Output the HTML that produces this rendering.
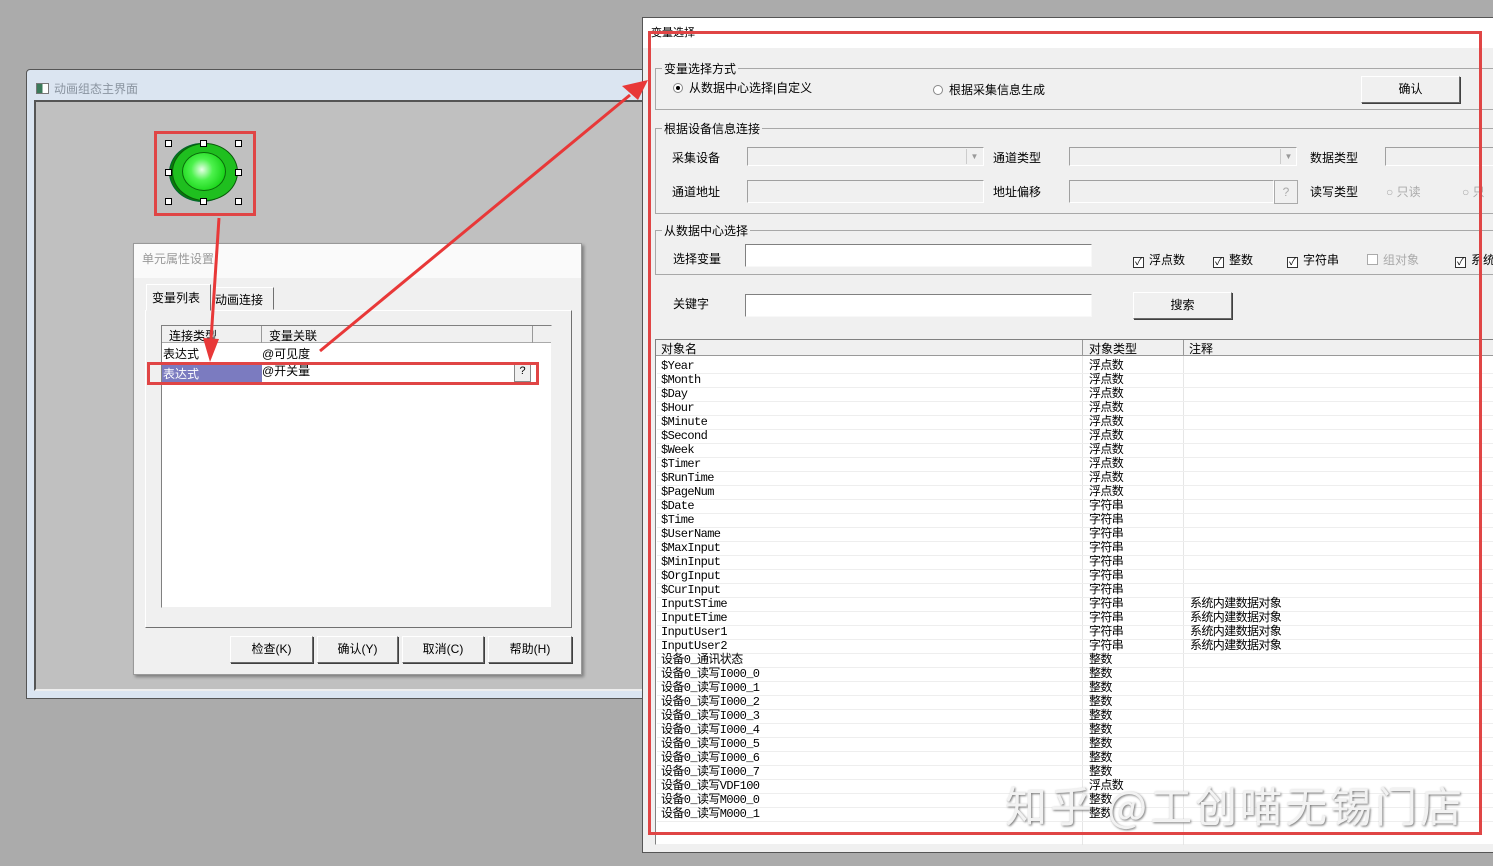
<!DOCTYPE html>
<html><head><meta charset="utf-8"><style>
*{margin:0;padding:0;box-sizing:border-box}
body{width:1493px;height:866px;background:#ababab;position:relative;overflow:hidden;font-family:"Liberation Sans","Noto Sans CJK SC",sans-serif;font-size:12px;color:#000}
.a{position:absolute;white-space:nowrap}
.btn{position:absolute;background:#f0f0f0;border:1px solid;border-color:#fff #6a6a6a #6a6a6a #fff;box-shadow:1px 1px 0 #404040;text-align:center;font-size:12px}
.in{position:absolute;background:#fff;border:1px solid;border-color:#808080 #f8f8f8 #f8f8f8 #808080}
.dis{position:absolute;background:#f0f0f0;border:1px solid;border-color:#a0a0a0 #fff #fff #a0a0a0}
.grp{position:absolute;border:1px solid #a8a8a8;border-right:none}
.lbl{position:absolute;background:#f0f0f0;padding:0 2px;font-size:12px}
.cb{display:inline-block;width:11px;height:11px;border:1px solid #333;background:#fff;font-size:10px;line-height:9px;text-align:center;vertical-align:-1px;margin-right:5px}
.row{position:absolute;left:657px;width:836px;height:14px;border-bottom:1px solid #eee;font-family:"Liberation Mono","Noto Sans CJK SC",monospace;font-size:12px;line-height:13px;letter-spacing:-0.6px}
.row span{position:absolute}
</style></head><body>

<div class="a" style="left:26px;top:69px;width:630px;height:630px;background:#dbe5f1;border:1px solid #555;border-radius:4px 4px 0 0"></div>
<div class="a" style="left:36px;top:80px;color:#8a94a0;font-size:12px"><span style="display:inline-block;width:13px;height:11px;border:1px solid #777;background:linear-gradient(90deg,#3b7a5a 50%,#fff 50%);vertical-align:-1px;margin-right:5px"></span>动画组态主界面</div>
<div class="a" style="left:34px;top:100px;width:620px;height:591px;background:#c0c0c0;border:2px solid #555;border-right:none;border-bottom-color:#eee"></div>

<div class="a" style="left:154px;top:131px;width:102px;height:85px;border:3px solid #e04545"></div>
<div class="a" style="left:169px;top:143px;width:66px;height:59px;border-radius:50%;background:#0a7a0a;border:1px solid #063"></div>
<div class="a" style="left:172px;top:143px;width:66px;height:58px;border-radius:50%;background:#1fbf1f;border:1px solid #0a5a0a"></div>
<div class="a" style="left:182px;top:152px;width:44px;height:39px;border-radius:50%;background:radial-gradient(circle at 45% 45%,#e8ffe8 0,#4df24d 35%,#12d012 80%);border:1px solid #0a6a0a"></div>
<div class="a" style="left:165px;top:140px;width:7px;height:7px;background:#fff;border:1px solid #000"></div>
<div class="a" style="left:200px;top:140px;width:7px;height:7px;background:#fff;border:1px solid #000"></div>
<div class="a" style="left:235px;top:140px;width:7px;height:7px;background:#fff;border:1px solid #000"></div>
<div class="a" style="left:165px;top:169px;width:7px;height:7px;background:#fff;border:1px solid #000"></div>
<div class="a" style="left:235px;top:169px;width:7px;height:7px;background:#fff;border:1px solid #000"></div>
<div class="a" style="left:165px;top:198px;width:7px;height:7px;background:#fff;border:1px solid #000"></div>
<div class="a" style="left:200px;top:198px;width:7px;height:7px;background:#fff;border:1px solid #000"></div>
<div class="a" style="left:235px;top:198px;width:7px;height:7px;background:#fff;border:1px solid #000"></div>

<div class="a" style="left:133px;top:243px;width:449px;height:432px;background:#f0f0f0;border:1px solid #999;box-shadow:2px 2px 3px rgba(0,0,0,.35)"></div>
<div class="a" style="left:134px;top:244px;width:447px;height:34px;background:#fafafa"></div>
<div class="a" style="left:142px;top:250px;color:#999">单元属性设置</div>
<div class="a" style="left:145px;top:310px;width:427px;height:318px;border:1px solid;border-color:#fff #707070 #707070 #fff"></div>
<div class="a" style="left:146px;top:284px;width:65px;height:27px;background:#f0f0f0;border:1px solid;border-color:#fff #707070 transparent #fff;padding:4px 5px">变量列表</div>
<div class="a" style="left:212px;top:287px;width:62px;height:23px;border:1px solid;border-color:#fff #707070 transparent transparent;padding:3px 2px">动画连接</div>
<div class="a" style="left:161px;top:325px;width:391px;height:283px;background:#fff;border:1px solid;border-color:#808080 #f0f0f0 #f0f0f0 #808080"></div>
<div class="a" style="left:162px;top:326px;width:389px;height:17px;background:#f0f0f0;border-bottom:1px solid #aaa"></div>
<div class="a" style="left:261px;top:326px;width:1px;height:17px;background:#999"></div>
<div class="a" style="left:532px;top:326px;width:1px;height:17px;background:#999"></div>
<div class="a" style="left:169px;top:327px">连接类型</div>
<div class="a" style="left:269px;top:327px">变量关联</div>
<div class="a" style="left:163px;top:345px">表达式</div>
<div class="a" style="left:262px;top:345px">@可见度</div>
<div class="a" style="left:162px;top:364px;width:100px;height:18px;background:#7b7bc0"></div>
<div class="a" style="left:163px;top:365px;color:#fff">表达式</div>
<div class="a" style="left:262px;top:362px">@开关量</div>
<div class="a" style="left:514px;top:364px;width:17px;height:18px;background:#f0f0f0;border:1px solid #888;text-align:center;font-size:11px">?</div>
<div class="a" style="left:147px;top:362px;width:392px;height:23px;border:3px solid #e04545"></div>
<div class="btn" style="left:230px;top:636px;width:83px;height:27px;line-height:25px">检查(K)</div>
<div class="btn" style="left:317px;top:636px;width:81px;height:27px;line-height:25px">确认(Y)</div>
<div class="btn" style="left:402px;top:636px;width:82px;height:27px;line-height:25px">取消(C)</div>
<div class="btn" style="left:488px;top:636px;width:84px;height:27px;line-height:25px">帮助(H)</div>

<div class="a" style="left:642px;top:17px;width:851px;height:836px;background:#f0f0f0;border:1px solid #555;border-right:none"></div>
<div class="a" style="left:643px;top:18px;width:850px;height:30px;background:#fff"></div>
<div class="a" style="left:651px;top:24px;font-size:11px">变量选择</div>

<div class="grp" style="left:655px;top:68px;width:838px;height:42px"></div>
<div class="lbl" style="left:662px;top:60px">变量选择方式</div>
<div class="a" style="left:673px;top:79px"><span style="display:inline-block;width:10px;height:10px;border-radius:50%;border:1px solid #888;background:#fff;vertical-align:-1px;margin-right:6px;position:relative"><span style="position:absolute;left:2px;top:2px;width:4px;height:4px;border-radius:50%;background:#000"></span></span>从数据中心选择|自定义</div>
<div class="a" style="left:933px;top:81px"><span style="display:inline-block;width:10px;height:10px;border-radius:50%;border:1px solid #888;background:#fff;vertical-align:-1px;margin-right:6px"></span>根据采集信息生成</div>
<div class="btn" style="left:1361px;top:76px;width:99px;height:27px;line-height:25px">确认</div>

<div class="grp" style="left:655px;top:128px;width:838px;height:86px"></div>
<div class="lbl" style="left:662px;top:120px">根据设备信息连接</div>
<div class="a" style="left:672px;top:149px">采集设备</div>
<div class="dis" style="left:747px;top:147px;width:237px;height:19px"></div>
<div class="a" style="left:966px;top:149px;width:16px;height:15px;border-left:1px solid #ccc;color:#999;font-size:8px;text-align:center;line-height:15px">▼</div>
<div class="a" style="left:993px;top:149px">通道类型</div>
<div class="dis" style="left:1069px;top:147px;width:228px;height:19px"></div>
<div class="a" style="left:1280px;top:149px;width:16px;height:15px;border-left:1px solid #ccc;color:#999;font-size:8px;text-align:center;line-height:15px">▼</div>
<div class="a" style="left:1310px;top:149px">数据类型</div>
<div class="dis" style="left:1385px;top:147px;width:110px;height:19px"></div>
<div class="a" style="left:672px;top:183px">通道地址</div>
<div class="dis" style="left:747px;top:180px;width:237px;height:23px"></div>
<div class="a" style="left:993px;top:183px">地址偏移</div>
<div class="dis" style="left:1069px;top:180px;width:205px;height:23px"></div>
<div class="a" style="left:1274px;top:180px;width:24px;height:24px;border:1px solid #aaa;color:#aaa;text-align:center;line-height:22px">?</div>
<div class="a" style="left:1310px;top:183px">读写类型</div>
<div class="a" style="left:1386px;top:183px;color:#aaa">○ 只读</div>
<div class="a" style="left:1462px;top:183px;color:#aaa">○ 只</div>

<div class="grp" style="left:655px;top:230px;width:838px;height:45px"></div>
<div class="lbl" style="left:662px;top:222px">从数据中心选择</div>
<div class="a" style="left:673px;top:250px">选择变量</div>
<div class="in" style="left:745px;top:244px;width:347px;height:23px"></div>
<div class="a" style="left:1133px;top:251px"><span class="cb">✓</span>浮点数</div>
<div class="a" style="left:1213px;top:251px"><span class="cb">✓</span>整数</div>
<div class="a" style="left:1287px;top:251px"><span class="cb">✓</span>字符串</div>
<div class="a" style="left:1367px;top:251px;color:#aaa"><span class="cb" style="border-color:#aaa"></span>组对象</div>
<div class="a" style="left:1455px;top:251px"><span class="cb">✓</span>系统</div>
<div class="a" style="left:673px;top:295px">关键字</div>
<div class="in" style="left:745px;top:294px;width:347px;height:23px"></div>
<div class="btn" style="left:1133px;top:292px;width:99px;height:27px;line-height:25px">搜索</div>

<div class="a" style="left:655px;top:339px;width:840px;height:506px;background:#fff;border:1px solid;border-color:#808080 #fff #f0f0f0 #808080"></div>
<div class="a" style="left:656px;top:340px;width:837px;height:16px;background:#f0f0f0;border-bottom:1px solid #999"></div>
<div class="a" style="left:1082px;top:340px;width:1px;height:505px;background:#e6e6e6"></div>
<div class="a" style="left:1183px;top:340px;width:1px;height:505px;background:#e6e6e6"></div>
<div class="a" style="left:1082px;top:340px;width:1px;height:16px;background:#999"></div>
<div class="a" style="left:1183px;top:340px;width:1px;height:16px;background:#999"></div>
<div class="a" style="left:661px;top:340px">对象名</div>
<div class="a" style="left:1089px;top:340px">对象类型</div>
<div class="a" style="left:1189px;top:340px">注释</div>

<div class="row" style="top:360px"><span style="left:4px">$Year</span><span style="left:432px">浮点数</span></div>
<div class="row" style="top:374px"><span style="left:4px">$Month</span><span style="left:432px">浮点数</span></div>
<div class="row" style="top:388px"><span style="left:4px">$Day</span><span style="left:432px">浮点数</span></div>
<div class="row" style="top:402px"><span style="left:4px">$Hour</span><span style="left:432px">浮点数</span></div>
<div class="row" style="top:416px"><span style="left:4px">$Minute</span><span style="left:432px">浮点数</span></div>
<div class="row" style="top:430px"><span style="left:4px">$Second</span><span style="left:432px">浮点数</span></div>
<div class="row" style="top:444px"><span style="left:4px">$Week</span><span style="left:432px">浮点数</span></div>
<div class="row" style="top:458px"><span style="left:4px">$Timer</span><span style="left:432px">浮点数</span></div>
<div class="row" style="top:472px"><span style="left:4px">$RunTime</span><span style="left:432px">浮点数</span></div>
<div class="row" style="top:486px"><span style="left:4px">$PageNum</span><span style="left:432px">浮点数</span></div>
<div class="row" style="top:500px"><span style="left:4px">$Date</span><span style="left:432px">字符串</span></div>
<div class="row" style="top:514px"><span style="left:4px">$Time</span><span style="left:432px">字符串</span></div>
<div class="row" style="top:528px"><span style="left:4px">$UserName</span><span style="left:432px">字符串</span></div>
<div class="row" style="top:542px"><span style="left:4px">$MaxInput</span><span style="left:432px">字符串</span></div>
<div class="row" style="top:556px"><span style="left:4px">$MinInput</span><span style="left:432px">字符串</span></div>
<div class="row" style="top:570px"><span style="left:4px">$OrgInput</span><span style="left:432px">字符串</span></div>
<div class="row" style="top:584px"><span style="left:4px">$CurInput</span><span style="left:432px">字符串</span></div>
<div class="row" style="top:598px"><span style="left:4px">InputSTime</span><span style="left:432px">字符串</span><span style="left:533px">系统内建数据对象</span></div>
<div class="row" style="top:612px"><span style="left:4px">InputETime</span><span style="left:432px">字符串</span><span style="left:533px">系统内建数据对象</span></div>
<div class="row" style="top:626px"><span style="left:4px">InputUser1</span><span style="left:432px">字符串</span><span style="left:533px">系统内建数据对象</span></div>
<div class="row" style="top:640px"><span style="left:4px">InputUser2</span><span style="left:432px">字符串</span><span style="left:533px">系统内建数据对象</span></div>
<div class="row" style="top:654px"><span style="left:4px">设备0_通讯状态</span><span style="left:432px">整数</span></div>
<div class="row" style="top:668px"><span style="left:4px">设备0_读写I000_0</span><span style="left:432px">整数</span></div>
<div class="row" style="top:682px"><span style="left:4px">设备0_读写I000_1</span><span style="left:432px">整数</span></div>
<div class="row" style="top:696px"><span style="left:4px">设备0_读写I000_2</span><span style="left:432px">整数</span></div>
<div class="row" style="top:710px"><span style="left:4px">设备0_读写I000_3</span><span style="left:432px">整数</span></div>
<div class="row" style="top:724px"><span style="left:4px">设备0_读写I000_4</span><span style="left:432px">整数</span></div>
<div class="row" style="top:738px"><span style="left:4px">设备0_读写I000_5</span><span style="left:432px">整数</span></div>
<div class="row" style="top:752px"><span style="left:4px">设备0_读写I000_6</span><span style="left:432px">整数</span></div>
<div class="row" style="top:766px"><span style="left:4px">设备0_读写I000_7</span><span style="left:432px">整数</span></div>
<div class="row" style="top:780px"><span style="left:4px">设备0_读写VDF100</span><span style="left:432px">浮点数</span></div>
<div class="row" style="top:794px"><span style="left:4px">设备0_读写M000_0</span><span style="left:432px">整数</span></div>
<div class="row" style="top:808px"><span style="left:4px">设备0_读写M000_1</span><span style="left:432px">整数</span></div>

<div class="a" style="left:648px;top:31px;width:834px;height:804px;border:3px solid #e04545"></div>

<div class="a" style="left:1005px;top:774px;font-size:42px;color:#f2f2f2;text-shadow:1px 1px 2px #777;font-family:'Noto Sans CJK SC',sans-serif;letter-spacing:3px">知乎 @工创喵无锡门店</div>

<svg class="a" style="left:0;top:0" width="1493" height="866">
<line x1="219" y1="218" x2="211" y2="340" stroke="#e83838" stroke-width="3"/>
<polygon points="203,338 219,339 210,362" fill="#e83838"/>
<line x1="320" y1="351" x2="630" y2="95" stroke="#e83838" stroke-width="3"/>
<polygon points="622,86 638,100 648,80" fill="#e83838"/>
</svg>
</body></html>
